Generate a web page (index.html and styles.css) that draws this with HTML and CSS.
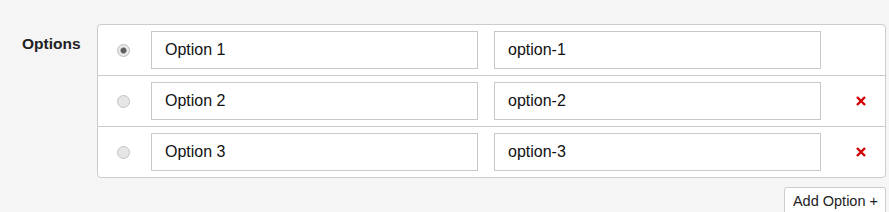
FILE: index.html
```html
<!DOCTYPE html>
<html lang="en">

<head>
  <meta charset="UTF-8">
  <meta name="viewport" content="width=device-width, initial-scale=1.0">
  <title>Options</title>
  <link rel="stylesheet" href="styles.css">
</head>

<body>
  <div class="field">
    <label class="label">Options</label>
    <div class="control">
      <div class="options">
        <div class="row">
          <input type="radio" name="default" class="pick" checked>
          <input type="text" class="text" value="Option 1">
          <input type="text" class="text" value="option-1">
          <span class="remove"></span>
        </div>
        <div class="row">
          <input type="radio" name="default" class="pick">
          <input type="text" class="text" value="Option 2">
          <input type="text" class="text" value="option-2">
          <span class="remove">
            <svg width="10" height="10" viewBox="0 0 10 10"><path d="M1 1L9 9M9 1L1 9" stroke="#d40000" stroke-width="2.4"/></svg>
          </span>
        </div>
        <div class="row">
          <input type="radio" name="default" class="pick">
          <input type="text" class="text" value="Option 3">
          <input type="text" class="text" value="option-3">
          <span class="remove">
            <svg width="10" height="10" viewBox="0 0 10 10"><path d="M1 1L9 9M9 1L1 9" stroke="#d40000" stroke-width="2.4"/></svg>
          </span>
        </div>
      </div>
      <div class="actions">
        <button class="add">Add Option +</button>
      </div>
    </div>
  </div>
</body>

</html>
```

FILE: styles.css
```css
body {
  margin: 0;
  background: #f5f5f5;
  font-family: "Liberation Sans", Arial, sans-serif;
  color: #222;
}

.field {
  display: flex;
  padding: 24px 3px 0 22px;
}

.label {
  width: 75px;
  padding-top: 11px;
  font-size: 15.5px;
  font-weight: bold;
  color: #222;
}

.control {
  flex: 1;
}

.options {
  background: #fff;
  border: 1px solid #ccc;
  border-radius: 4px;
}

.row {
  display: flex;
  align-items: center;
  height: 50px;
  padding-left: 19px;
  border-top: 1px solid #ccc;
}

.row:first-child {
  border-top: none;
}

.pick {
  appearance: none;
  -webkit-appearance: none;
  box-sizing: border-box;
  width: 13px;
  height: 13px;
  margin: 0 21px 0 0;
  border: 1px solid #c4c4c4;
  border-radius: 50%;
  background: #e6e6e6;
}

.pick:checked {
  background: radial-gradient(circle, #606060 0, #606060 2.5px, #e9e9e9 3.5px);
  border-color: #bdbdbd;
}

.text {
  box-sizing: border-box;
  width: 327px;
  height: 38px;
  margin-right: 16px;
  padding: 0 13px;
  border: 1px solid #c8c8c8;
  font-family: inherit;
  font-size: 16px;
  color: #111;
  outline: none;
}

.remove {
  flex: 1;
  display: flex;
  justify-content: center;
}

.remove svg {
  display: block;
}

.actions {
  display: flex;
  justify-content: flex-end;
  padding-top: 9px;
}

.add {
  height: 28px;
  padding: 0 7px 0 8px;
  background: #fff;
  border: 1px solid #ccc;
  border-radius: 3px;
  font-family: inherit;
  font-size: 14.5px;
  color: #222;
}
```
